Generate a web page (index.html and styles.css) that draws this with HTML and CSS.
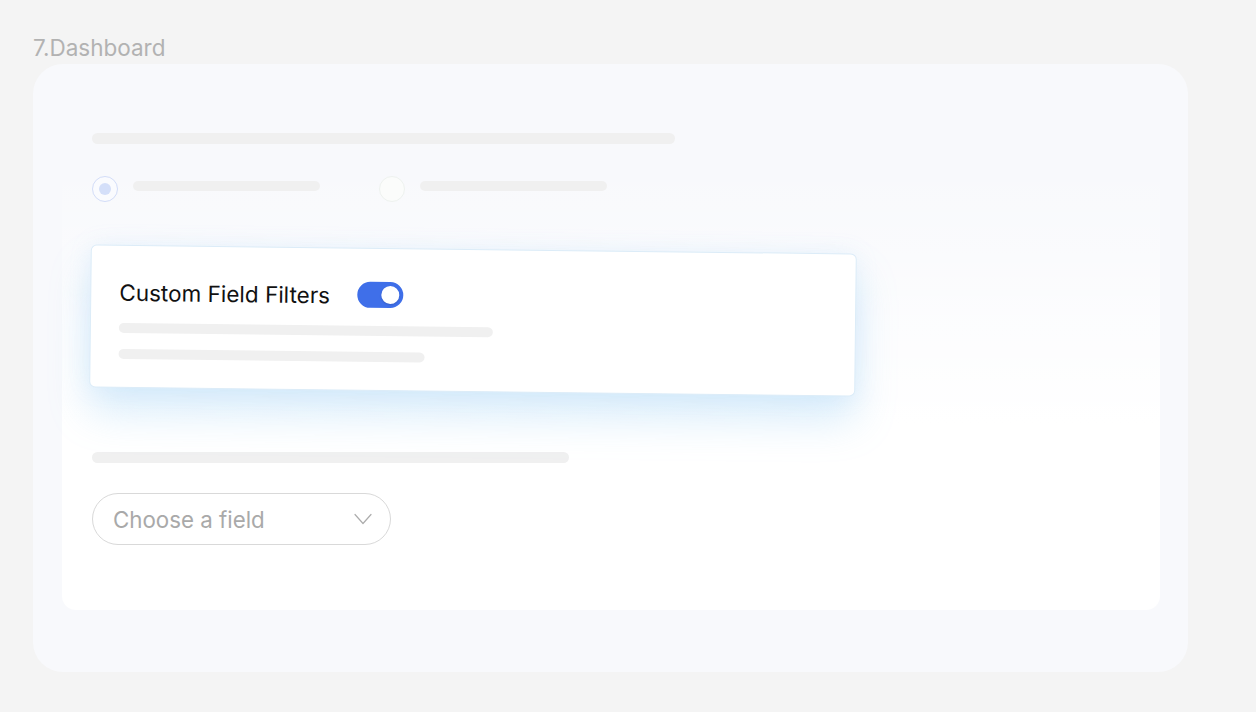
FILE: index.html
```html
<!DOCTYPE html>
<html>
<head>
<meta charset="utf-8">
<link rel="stylesheet" href="styles.css">
</head>
<body>
<div class="title">7.Dashboard</div>
<div class="frame">
  <div class="panel">
    <div class="sk sk-head"></div>
    <div class="radios">
      <div class="radio-item">
        <span class="radio on"><span class="dot"></span></span>
        <span class="sk sk-radio"></span>
      </div>
      <div class="radio-item">
        <span class="radio"></span>
        <span class="sk sk-radio"></span>
      </div>
    </div>
    <div class="float-card">
      <div class="fc-head">
        <span class="fc-title">Custom Field Filters</span>
        <span class="toggle"><span class="knob"></span></span>
      </div>
      <div class="sk sk-l1"></div>
      <div class="sk sk-l2"></div>
    </div>
    <div class="sk sk-mid"></div>
    <div class="select">
      <span class="select-text">Choose a field</span>
      <svg class="chev" width="18" height="12" viewBox="0 0 18 12"><path d="M1 1.5 L9 10.5 L17 1.5" fill="none" stroke="#acacac" stroke-width="1.2" stroke-linecap="round" stroke-linejoin="round"/></svg>
    </div>
  </div>
</div>
</body>
</html>
```
FILE: styles.css
```css
* { box-sizing: border-box; }
html, body { margin: 0; }
body {
  background: #f4f4f4;
  padding: 35px 0 0 33px;
  font-family: Inter, "Noto Sans", sans-serif;
  height: 712px;
  overflow: hidden;
}
.title {
  font-size: 22.5px;
  line-height: 26px;
  height: 29px;
  color: #b2b2b2;
}
.frame {
  width: 1155px;
  height: 608px;
  background: #f8f9fc;
  border-radius: 30px;
  padding: 16px 28px 62px 29px;
  display: flex;
  flex-direction: column;
}
.panel {
  flex: 1;
  border-radius: 14px;
  background: linear-gradient(to bottom, rgba(255,255,255,0) 0%, rgba(255,255,255,0) 15%, rgba(255,255,255,0.25) 30%, rgba(255,255,255,0.6) 45%, #ffffff 65%);
  padding: 53px 30px 0 30px;
  display: flex;
  flex-direction: column;
  align-items: flex-start;
}
.sk {
  display: block;
  background: #f0f0f0;
  border-radius: 6px;
}
.sk-head { width: 583px; height: 11px; }
.radios {
  margin-top: 32px;
  display: flex;
  gap: 59px;
}
.radio-item {
  display: flex;
  align-items: center;
  gap: 15px;
}
.radio {
  width: 26px;
  height: 26px;
  border-radius: 50%;
  border: 1.5px solid #eef2ef;
  display: flex;
  align-items: center;
  justify-content: center;
  background: #fbfcfb;
}
.radio.on { border-color: #d3ddf8; background: #fafbfe; }
.dot { width: 12px; height: 12px; border-radius: 50%; background: #d4dff9; }
.sk-radio { width: 187px; height: 10px; margin-bottom: 6px; }

.float-card {
  margin-top: 47px;
  margin-left: -2px;
  width: 766px;
  height: 143px;
  background: #fff;
  border: 1px solid #dcecf8;
  border-radius: 6px;
  transform: rotate(0.67deg);
  box-shadow: 0 24px 40px rgba(120, 190, 240, 0.28), 0 0 22px rgba(160, 210, 245, 0.15);
  padding: 32px 0 0 28px;
}
.fc-head {
  display: flex;
  align-items: center;
  height: 28px;
}
.fc-title {
  font-size: 22.5px;
  color: #111111;
}
.toggle {
  margin-left: 27px;
  width: 46px;
  height: 26px;
  border-radius: 13px;
  background: #3f6fe9;
  display: flex;
  align-items: center;
  justify-content: flex-end;
  padding-right: 4px;
}
.knob {
  width: 18px;
  height: 18px;
  border-radius: 50%;
  background: #fff;
  box-shadow: 0 1px 2px rgba(0,0,0,0.15);
}
.sk-l1 { margin-top: 17px; width: 374px; height: 10px; }
.sk-l2 { margin-top: 16px; width: 306px; height: 10px; }

.sk-mid { margin-top: 60px; width: 477px; height: 11px; }
.select {
  margin-top: 30px;
  width: 299px;
  height: 52px;
  border: 1.5px solid #d9d9d9;
  border-radius: 26px;
  display: flex;
  align-items: center;
  justify-content: space-between;
  padding: 0 18px 0 20px;
}
.select-text {
  font-size: 22.3px;
  color: #a9a9a9;
}
.chev { display: block; }
```
